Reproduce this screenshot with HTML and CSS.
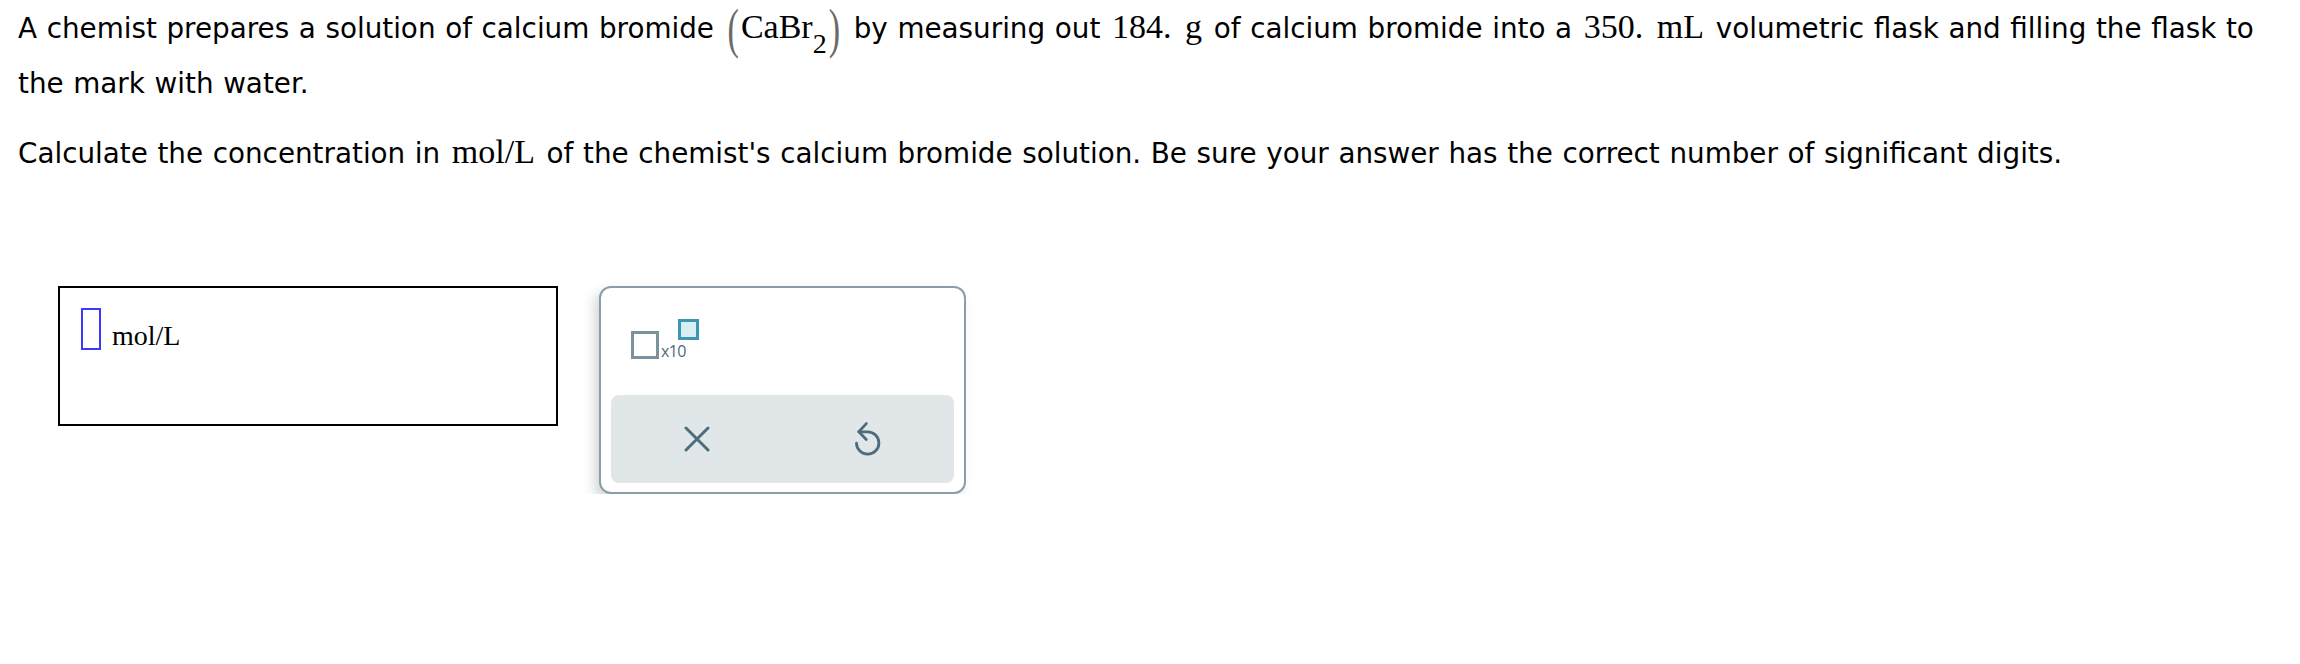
FILE: index.html
```html
<!DOCTYPE html>
<html lang="en">
<head>
<meta charset="utf-8">
<title>Calcium bromide concentration</title>
<link rel="stylesheet" href="styles.css">
</head>
<body>
<div class="page">
  <p class="q">A chemist prepares a solution of calcium bromide <span class="math"><span class="paren">(</span>CaBr<span class="sub">2</span><span class="paren">)</span></span> by measuring out <span class="math">184.</span> <span class="math">g</span> of calcium bromide into a <span class="math">350.</span> <span class="math">mL</span> volumetric flask and filling the flask to the mark with water.</p>
  <p class="q q2">Calculate the concentration in <span class="math">mol/L</span> of the chemist's calcium bromide solution. Be sure your answer has the correct number of significant digits.</p>

  <div class="answer-row">
    <div class="answer-box">
      <div class="answer-line">
        <span class="slot"></span>
        <span class="unit">mol/L</span>
      </div>
    </div>

    <div class="keypad">
      <div class="keypad-top">
        <div class="sci" aria-label="scientific notation">
          <span class="sci-base"></span>
          <span class="sci-ten">x10</span>
          <span class="sci-sup"></span>
        </div>
      </div>
      <div class="actions">
        <div class="action" aria-label="clear">
          <svg class="icon-x" width="26" height="26" viewBox="0 0 26 26">
            <path d="M2 2 L24 24 M24 2 L2 24" />
          </svg>
        </div>
        <div class="action" aria-label="undo">
          <svg class="icon-undo" width="34" height="38" viewBox="0 0 34 38">
            <path d="M15.3 3.6 L7.8 11.8 L15.3 19.4" />
            <path d="M7.8 11.8 H16.7 A11.2 11.2 0 1 1 5.5 23.2" />
          </svg>
        </div>
      </div>
    </div>
  </div>
</div>
</body>
</html>
```

FILE: styles.css
```css
html, body {
  margin: 0;
  padding: 0;
  background: #ffffff;
}

.page {
  padding: 3px 0 0 18px;
  width: 2264px;
  font-family: "DejaVu Sans", Verdana, sans-serif;
  font-size: 27.8px;
  word-spacing: 0.8px;
  color: #000000;
}

.q {
  margin: 0;
  line-height: 52px;
}

.q2 {
  margin-top: 18px;
}

.math {
  font-family: "Liberation Serif", "Times New Roman", serif;
  font-size: 34px;
  line-height: 1;
  word-spacing: 0;
  margin: 0 2px;
}

.paren {
  display: inline-block;
  color: #6a6a6a;
  transform: scaleY(1.6);
  transform-origin: 50% 38%;
  margin: 0 2px;
}

.sub {
  font-size: 28px;
  vertical-align: -15px;
  line-height: 1;
}

.answer-row {
  display: flex;
  align-items: flex-start;
  margin: 106px 0 0 40px;
}

.answer-box {
  box-sizing: border-box;
  width: 500px;
  height: 140px;
  border: 2px solid #000000;
  padding: 20px 0 0 21px;
}

.answer-line {
  display: flex;
  align-items: flex-end;
}

.slot {
  box-sizing: border-box;
  width: 20px;
  height: 42px;
  border: 2px solid #3a3aff;
}

.unit {
  margin-left: 11px;
  font-family: "Liberation Serif", "Times New Roman", serif;
  font-size: 28px;
  line-height: 28px;
}

.keypad {
  box-sizing: border-box;
  width: 367px;
  margin: 0 0 0 41px;
  border: 2px solid #8a9ea7;
  border-radius: 12px;
  padding: 0 10px 9px 10px;
  background: #ffffff;
  box-shadow: -5px 6px 12px rgba(40, 60, 70, 0.2);
}

.keypad-top {
  padding: 31px 0 36px 20px;
}

.sci {
  display: flex;
  align-items: flex-end;
  height: 40px;
}

.sci-base {
  box-sizing: border-box;
  width: 28px;
  height: 28px;
  border: 3px solid #7b919b;
}

.sci-ten {
  margin-left: 2px;
  font-family: "Open Sans", "Noto Sans", sans-serif;
  font-size: 16px;
  line-height: 15px;
  color: #4d6a77;
  letter-spacing: -0.6px;
}

.sci-sup {
  align-self: flex-start;
  box-sizing: border-box;
  width: 21px;
  height: 21px;
  margin-left: -8px;
  border: 3px solid #3d97b0;
  background: #d6eef4;
}

.actions {
  display: flex;
  height: 88px;
  border-radius: 8px;
  background: #e1e6e9;
}

.action {
  flex: 1;
  display: flex;
  align-items: center;
  justify-content: center;
}

.icon-x path,
.icon-undo path {
  fill: none;
  stroke: #4d6d7a;
  stroke-width: 3;
  stroke-linecap: round;
  stroke-linejoin: round;
}

.icon-undo path {
  stroke-width: 2.8;
}
```
